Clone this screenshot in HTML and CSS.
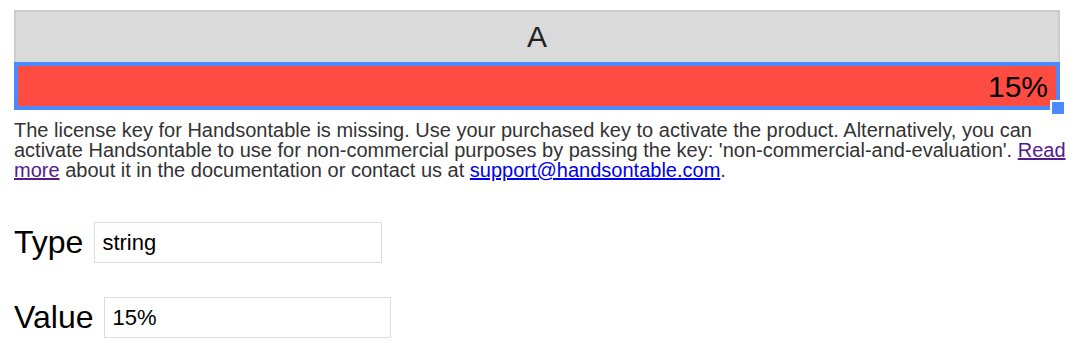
FILE: index.html
```html
<!DOCTYPE html>
<html>
<head>
<meta charset="utf-8">
<link rel="stylesheet" href="styles.css">
</head>
<body>
<div class="page">
  <div class="hot">
    <div class="col-header">A</div>
    <div class="cell">15%</div>
    <div class="handle"></div>
  </div>
  <p class="license">The license key for Handsontable is missing. Use your purchased key to activate the product. Alternatively, you can activate Handsontable to use for non-commercial purposes by passing the key: 'non-commercial-and-evaluation'. <a class="visited" href="#">Read more</a> about it in the documentation or contact us at <a class="mail" href="#">support@handsontable.com</a>.</p>
  <div class="field">
    <label class="label">Type</label>
    <div class="input type-input">string</div>
  </div>
  <div class="field">
    <label class="label">Value</label>
    <div class="input value-input">15%</div>
  </div>
</div>
</body>
</html>
```
FILE: styles.css
```css
html, body {
  margin: 0;
  padding: 0;
  background: #fff;
}
.page {
  padding: 10px 12px 0 14px;
  font-family: "Liberation Sans", Arial, sans-serif;
}
.hot {
  position: relative;
  width: 1046px;
}
.col-header {
  height: 50px;
  background: #dadada;
  border: 2px solid #cccccc;
  border-bottom: none;
  box-sizing: content-box;
  text-align: center;
  font-size: 30px;
  line-height: 50px;
  color: #222;
}
.cell {
  height: 40px;
  background: #ff4c42;
  border: 4px solid #4b89ff;
  text-align: right;
  font-size: 30px;
  line-height: 42px;
  padding-right: 8px;
  color: #000;
}
.handle {
  position: absolute;
  right: -6px;
  bottom: -6px;
  width: 12px;
  height: 12px;
  background: #4b89ff;
  border: 2px solid #fff;
  box-sizing: content-box;
}
.license {
  margin: 10px 0 0 0;
  font-size: 20px;
  line-height: 20px;
  color: #333;
}
.license a.visited {
  color: #551a8b;
}
.license a.mail {
  color: #0000ee;
}
.field {
  display: flex;
  align-items: center;
  gap: 11px;
  margin-top: 42px;
}
.field + .field {
  margin-top: 34px;
}
.label {
  font-size: 32px;
  color: #000;
}
.input {
  box-sizing: border-box;
  height: 41px;
  border: 1px solid #dddddd;
  font-size: 22px;
  line-height: 39px;
  padding-left: 7px;
  color: #000;
}
.type-input {
  width: 288px;
}
.value-input {
  width: 287px;
}
```
